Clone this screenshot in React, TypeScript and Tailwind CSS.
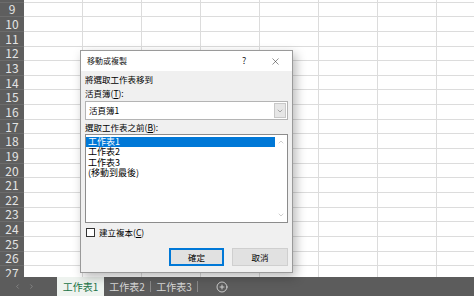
import { ChevronDown, ChevronLeft, ChevronRight, ChevronUp, CirclePlus, X } from "lucide-react";

const ROWS = Array.from({ length: 20 }, (_, i) => i + 8);
const COLS = Array.from({ length: 8 }, (_, i) => i);
const SHEETS = ["工作表1", "工作表2", "工作表3"];
const LIST = ["工作表1", "工作表2", "工作表3", "(移動到最後)"];

function Grid() {
  return (
    <div className="h-[277px] overflow-hidden">
      <div className="mt-[-12px] flex flex-col">
        {ROWS.map((r) => (
          <div key={r} className="flex h-[14.65px] shrink-0">
            <div className="flex w-[24px] shrink-0 items-center justify-center border-b border-[#6c6c6c] bg-[#5e5e5e] text-[12px] leading-none text-[#e4e4e4]">
              {r}
            </div>
            {COLS.map((c) => (
              <div key={c} className="w-[59px] shrink-0 border-r border-b border-[#dcdcdc] bg-white" />
            ))}
          </div>
        ))}
      </div>
    </div>
  );
}

function TabBar() {
  return (
    <div className="flex h-[19px] items-stretch bg-[#5c5c5c] text-[10px]">
      <div className="flex w-[57px] items-center gap-[7px] pl-[14px] text-[#9c9c9c]">
        <ChevronLeft size={7} strokeWidth={2} />
        <ChevronRight size={7} strokeWidth={2} />
      </div>
      {SHEETS.map((s, i) => (
        <div key={s} className="flex items-center">
          <div
            className={
              i === 0
                ? "flex h-full w-[47px] items-center justify-center bg-[#eef3ef] text-[#217346]"
                : "flex h-full w-[46px] items-center justify-center text-[#d8d8d8]"
            }
          >
            {s}
          </div>
          {i > 0 && <div className="h-[11px] w-px bg-[#8a8a8a]" />}
        </div>
      ))}
      <div className="flex items-center pl-[18px] text-[#e6e6e6]">
        <CirclePlus size={12} strokeWidth={1.6} />
      </div>
    </div>
  );
}

function Dialog() {
  return (
    <div className="absolute top-[50px] left-[80px] flex w-[213px] flex-col border border-[#9a9a9a] bg-[#f0f0f0] text-[8.5px] text-black shadow-[3px_4px_10px_rgba(0,0,0,0.28)]">
      <div className="flex h-[20px] items-center bg-white pl-[6px] text-[8px] text-[#222]">
        <span className="flex-1">移動或複製</span>
        <span className="w-[28px] text-[9px]">?</span>
        <span className="flex w-[22px] items-center text-[#333]">
          <X size={11} strokeWidth={1.2} />
        </span>
      </div>
      <div className="flex flex-col px-[4px] pt-[1px] pb-[6px]">
        <div className="h-[14px] leading-[14px]">將選取工作表移到</div>
        <div className="h-[14px] leading-[14px]">
          活頁簿(<span className="underline">T</span>):
        </div>
        <div className="mt-[1px] flex h-[19px] items-center border border-[#b4b4b4] bg-white pl-[3px]">
          <span className="flex-1">活頁簿1</span>
          <span className="mr-px flex h-[15px] w-[12px] items-center justify-center border border-[#c8c8c8] bg-[#e6e6e6] text-[#666]">
            <ChevronDown size={8} strokeWidth={1.5} />
          </span>
        </div>
        <div className="h-[14px] leading-[14px]">
          選取工作表之前(<span className="underline">B</span>):
        </div>
        <div className="flex h-[89px] border border-[#8c8c8c] bg-white">
          <div className="flex flex-1 flex-col pt-[2px]">
            {LIST.map((l, i) => (
              <div
                key={l}
                className={
                  i === 0
                    ? "h-[10.3px] bg-[#0078d7] pl-[2px] text-[9px] leading-[10.3px] text-white"
                    : "h-[10.3px] pl-[2px] text-[9px] leading-[10.3px]"
                }
              >
                {l}
              </div>
            ))}
          </div>
          <div className="flex w-[12px] flex-col items-center justify-between py-[3px] text-[#a4a4a4]">
            <ChevronUp size={8} strokeWidth={1.6} />
            <ChevronDown size={8} strokeWidth={1.6} />
          </div>
        </div>
        <div className="flex h-[18px] items-center gap-[4px] pl-px">
          <span className="h-[9px] w-[9px] border border-[#333] bg-white" />
          <span>
            建立複本(<span className="underline">C</span>)
          </span>
        </div>
        <div className="mt-[7px] flex justify-end gap-[8px]">
          <div className="flex h-[18px] w-[55px] items-center justify-center border border-[#0078d7] bg-[#e1e1e1] shadow-[inset_0_0_0_1px_#0078d7]">
            確定
          </div>
          <div className="flex h-[18px] w-[56px] items-center justify-center border border-[#cfcfcf] bg-[#e1e1e1]">
            取消
          </div>
        </div>
      </div>
    </div>
  );
}

export default function App() {
  return (
    <div
      className="relative flex h-[296px] w-[474px] flex-col overflow-hidden bg-white"
      style={{ fontFamily: '"Noto Sans CJK TC", "Noto Sans", sans-serif' }}
    >
      <Grid />
      <TabBar />
      <Dialog />
    </div>
  );
}
